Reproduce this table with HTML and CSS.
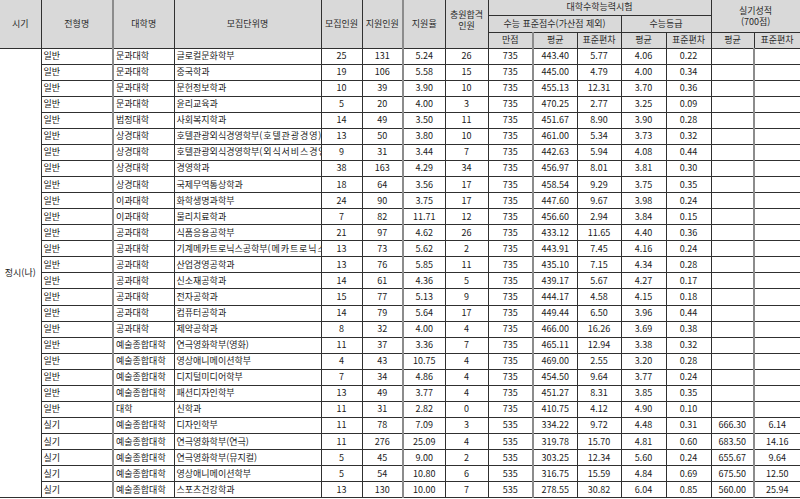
FILE: index.html
```html
<!DOCTYPE html>
<html lang="ko">
<head>
<meta charset="utf-8">
<title>정시 입시결과</title>
<link rel="stylesheet" href="styles.css">
</head>
<body>
<table class="grid">
<colgroup>
<col class="w41"><col class="w72"><col class="w61"><col class="w147"><col class="w41"><col class="w41"><col class="w42"><col class="w43"><col class="w45"><col class="w44"><col class="w44"><col class="w45"><col class="w45"><col class="w43"><col class="w46">
</colgroup>
<thead>
<tr class="h1">
<th rowspan="3">시기</th>
<th rowspan="3">전형명</th>
<th rowspan="3" class="g">대학명</th>
<th rowspan="3">모집단위명</th>
<th rowspan="3">모집인원</th>
<th rowspan="3">지원인원</th>
<th rowspan="3" class="g">지원율</th>
<th rowspan="3" class="up two">충원합격<br>인원</th>
<th colspan="5">대학수학능력시험</th>
<th colspan="2" rowspan="2" class="two">실기성적<br>(700점)</th>
</tr>
<tr class="h2">
<th colspan="3">수능 표준점수(가산점 제외)</th>
<th colspan="2">수능등급</th>
</tr>
<tr class="h3">
<th>만점</th><th class="g">평균</th><th>표준편차</th><th>평균</th><th>표준편차</th><th>평균</th><th>표준편차</th>
</tr>
</thead>
<tbody>
<tr><td rowspan="28" class="period">정시(나)</td><td class="t">일반</td><td class="t g">문과대학</td><td class="t">글로컬문화학부</td><td>25</td><td>131</td><td class="g">5.24</td><td>26</td><td>735</td><td class="g">443.40</td><td>5.77</td><td>4.06</td><td>0.22</td><td></td><td class="g"></td></tr>
<tr><td class="t">일반</td><td class="t g">문과대학</td><td class="t">중국학과</td><td>19</td><td>106</td><td class="g">5.58</td><td>15</td><td>735</td><td class="g">445.00</td><td>4.79</td><td>4.00</td><td>0.34</td><td></td><td class="g"></td></tr>
<tr><td class="t">일반</td><td class="t g">문과대학</td><td class="t">문헌정보학과</td><td>10</td><td>39</td><td class="g">3.90</td><td>10</td><td>735</td><td class="g">455.13</td><td>12.31</td><td>3.70</td><td>0.36</td><td></td><td class="g"></td></tr>
<tr><td class="t">일반</td><td class="t g">문과대학</td><td class="t">윤리교육과</td><td>5</td><td>20</td><td class="g">4.00</td><td>3</td><td>735</td><td class="g">470.25</td><td>2.77</td><td>3.25</td><td>0.09</td><td></td><td class="g"></td></tr>
<tr><td class="t">일반</td><td class="t g">법정대학</td><td class="t">사회복지학과</td><td>14</td><td>49</td><td class="g">3.50</td><td>11</td><td>735</td><td class="g">451.67</td><td>8.90</td><td>3.90</td><td>0.28</td><td></td><td class="g"></td></tr>
<tr><td class="t">일반</td><td class="t g">상경대학</td><td class="t"><div class="clip">호텔관광외식경영학부<span class="wide">(호텔관광경영)</span></div></td><td>13</td><td>50</td><td class="g">3.80</td><td>10</td><td>735</td><td class="g">461.00</td><td>5.34</td><td>3.73</td><td>0.32</td><td></td><td class="g"></td></tr>
<tr><td class="t">일반</td><td class="t g">상경대학</td><td class="t"><div class="clip">호텔관광외식경영학부<span class="wide">(외식서비스경영)</span></div></td><td>9</td><td>31</td><td class="g">3.44</td><td>7</td><td>735</td><td class="g">442.63</td><td>5.94</td><td>4.08</td><td>0.44</td><td></td><td class="g"></td></tr>
<tr><td class="t">일반</td><td class="t g">상경대학</td><td class="t">경영학과</td><td>38</td><td>163</td><td class="g">4.29</td><td>34</td><td>735</td><td class="g">456.97</td><td>8.01</td><td>3.81</td><td>0.30</td><td></td><td class="g"></td></tr>
<tr><td class="t">일반</td><td class="t g">상경대학</td><td class="t">국제무역통상학과</td><td>18</td><td>64</td><td class="g">3.56</td><td>17</td><td>735</td><td class="g">458.54</td><td>9.29</td><td>3.75</td><td>0.35</td><td></td><td class="g"></td></tr>
<tr><td class="t">일반</td><td class="t g">이과대학</td><td class="t">화학생명과학부</td><td>24</td><td>90</td><td class="g">3.75</td><td>17</td><td>735</td><td class="g">447.60</td><td>9.67</td><td>3.98</td><td>0.24</td><td></td><td class="g"></td></tr>
<tr><td class="t">일반</td><td class="t g">이과대학</td><td class="t">물리치료학과</td><td>7</td><td>82</td><td class="g">11.71</td><td>12</td><td>735</td><td class="g">456.60</td><td>2.94</td><td>3.84</td><td>0.15</td><td></td><td class="g"></td></tr>
<tr><td class="t">일반</td><td class="t g">공과대학</td><td class="t">식품응용공학부</td><td>21</td><td>97</td><td class="g">4.62</td><td>26</td><td>735</td><td class="g">433.12</td><td>11.65</td><td>4.40</td><td>0.36</td><td></td><td class="g"></td></tr>
<tr><td class="t">일반</td><td class="t g">공과대학</td><td class="t"><div class="clip">기계메카트로닉스공학부<span class="wide">(메카트로닉스)</span></div></td><td>13</td><td>73</td><td class="g">5.62</td><td>2</td><td>735</td><td class="g">443.91</td><td>7.45</td><td>4.16</td><td>0.24</td><td></td><td class="g"></td></tr>
<tr><td class="t">일반</td><td class="t g">공과대학</td><td class="t">산업경영공학과</td><td>13</td><td>76</td><td class="g">5.85</td><td>11</td><td>735</td><td class="g">435.10</td><td>7.15</td><td>4.34</td><td>0.28</td><td></td><td class="g"></td></tr>
<tr><td class="t">일반</td><td class="t g">공과대학</td><td class="t">신소재공학과</td><td>14</td><td>61</td><td class="g">4.36</td><td>5</td><td>735</td><td class="g">439.17</td><td>5.67</td><td>4.27</td><td>0.17</td><td></td><td class="g"></td></tr>
<tr><td class="t">일반</td><td class="t g">공과대학</td><td class="t">전자공학과</td><td>15</td><td>77</td><td class="g">5.13</td><td>9</td><td>735</td><td class="g">444.17</td><td>4.58</td><td>4.15</td><td>0.18</td><td></td><td class="g"></td></tr>
<tr><td class="t">일반</td><td class="t g">공과대학</td><td class="t">컴퓨터공학과</td><td>14</td><td>79</td><td class="g">5.64</td><td>17</td><td>735</td><td class="g">449.44</td><td>6.50</td><td>3.96</td><td>0.44</td><td></td><td class="g"></td></tr>
<tr><td class="t">일반</td><td class="t g">공과대학</td><td class="t">제약공학과</td><td>8</td><td>32</td><td class="g">4.00</td><td>4</td><td>735</td><td class="g">466.00</td><td>16.26</td><td>3.69</td><td>0.38</td><td></td><td class="g"></td></tr>
<tr><td class="t">일반</td><td class="t g">예술종합대학</td><td class="t">연극영화학부(영화)</td><td>11</td><td>37</td><td class="g">3.36</td><td>7</td><td>735</td><td class="g">465.11</td><td>12.94</td><td>3.38</td><td>0.32</td><td></td><td class="g"></td></tr>
<tr><td class="t">일반</td><td class="t g">예술종합대학</td><td class="t">영상애니메이션학부</td><td>4</td><td>43</td><td class="g">10.75</td><td>4</td><td>735</td><td class="g">469.00</td><td>2.55</td><td>3.20</td><td>0.28</td><td></td><td class="g"></td></tr>
<tr><td class="t">일반</td><td class="t g">예술종합대학</td><td class="t">디지털미디어학부</td><td>7</td><td>34</td><td class="g">4.86</td><td>4</td><td>735</td><td class="g">454.50</td><td>9.64</td><td>3.77</td><td>0.24</td><td></td><td class="g"></td></tr>
<tr><td class="t">일반</td><td class="t g">예술종합대학</td><td class="t">패션디자인학부</td><td>13</td><td>49</td><td class="g">3.77</td><td>4</td><td>735</td><td class="g">451.27</td><td>8.31</td><td>3.85</td><td>0.35</td><td></td><td class="g"></td></tr>
<tr><td class="t">일반</td><td class="t g">대학</td><td class="t">신학과</td><td>11</td><td>31</td><td class="g">2.82</td><td>0</td><td>735</td><td class="g">410.75</td><td>4.12</td><td>4.90</td><td>0.10</td><td></td><td class="g"></td></tr>
<tr><td class="t">실기</td><td class="t g">예술종합대학</td><td class="t">디자인학부</td><td>11</td><td>78</td><td class="g">7.09</td><td>3</td><td>535</td><td class="g">334.22</td><td>9.72</td><td>4.48</td><td>0.31</td><td>666.30</td><td class="g">6.14</td></tr>
<tr><td class="t">실기</td><td class="t g">예술종합대학</td><td class="t">연극영화학부(연극)</td><td>11</td><td>276</td><td class="g">25.09</td><td>4</td><td>535</td><td class="g">319.78</td><td>15.70</td><td>4.81</td><td>0.60</td><td>683.50</td><td class="g">14.16</td></tr>
<tr><td class="t">실기</td><td class="t g">예술종합대학</td><td class="t">연극영화학부(뮤지컬)</td><td>5</td><td>45</td><td class="g">9.00</td><td>2</td><td>535</td><td class="g">303.25</td><td>12.34</td><td>5.60</td><td>0.24</td><td>655.67</td><td class="g">9.64</td></tr>
<tr><td class="t">실기</td><td class="t g">예술종합대학</td><td class="t">영상애니메이션학부</td><td>5</td><td>54</td><td class="g">10.80</td><td>6</td><td>535</td><td class="g">316.75</td><td>15.59</td><td>4.84</td><td>0.69</td><td>675.50</td><td class="g">12.50</td></tr>
<tr><td class="t">실기</td><td class="t g">예술종합대학</td><td class="t">스포츠건강학과</td><td>13</td><td>130</td><td class="g">10.00</td><td>7</td><td>535</td><td class="g">278.55</td><td>30.82</td><td>6.04</td><td>0.85</td><td>560.00</td><td class="g">25.94</td></tr>
</tbody>
</table>
</body>
</html>
```

FILE: styles.css
```css
html, body {
  margin: 0;
  padding: 0;
  background: #ffffff;
}

body {
  width: 800px;
  height: 499px;
  overflow: hidden;
  font-family: "Noto Sans CJK KR", "Noto Sans", sans-serif;
  font-size: 9px;
  color: #1a1a1a;
}

.grid {
  width: 800px;
  table-layout: fixed;
  border-collapse: collapse;
  border-spacing: 0;
}

.w41 { width: 41px; }
.w42 { width: 42px; }
.w43 { width: 43px; }
.w44 { width: 44px; }
.w45 { width: 45px; }
.w46 { width: 46px; }
.w61 { width: 61px; }
.w72 { width: 72px; }
.w147 { width: 147px; }

.grid th,
.grid td {
  border: 1px solid #303030;
  padding: 0;
  line-height: 10px;
  white-space: nowrap;
  overflow: hidden;
  vertical-align: middle;
  text-align: center;
}

.grid th {
  background: #d9d9d9;
  font-weight: normal;
  color: #2a2a2a;
}

.grid thead tr:first-child th {
  border-top: none;
}

.grid th:first-child,
.grid td.period {
  border-left: none;
}

.grid .h1 { height: 15px; }
.grid .h2 { height: 17px; }
.grid .h3 { height: 16px; }

.grid th.two {
  line-height: 11px;
}

.grid th.up {
  padding-bottom: 8px;
}

.grid tbody tr {
  height: 16.07px;
}

.grid td.t {
  text-align: left;
  padding-left: 2px;
}

.grid td.period {
  text-align: center;
}

.grid .g {
  border-left: 2px solid #8c8c8c;
}

.clip {
  width: 144px;
  overflow: hidden;
  white-space: nowrap;
}

.wide {
  letter-spacing: 0.9px;
}
```
